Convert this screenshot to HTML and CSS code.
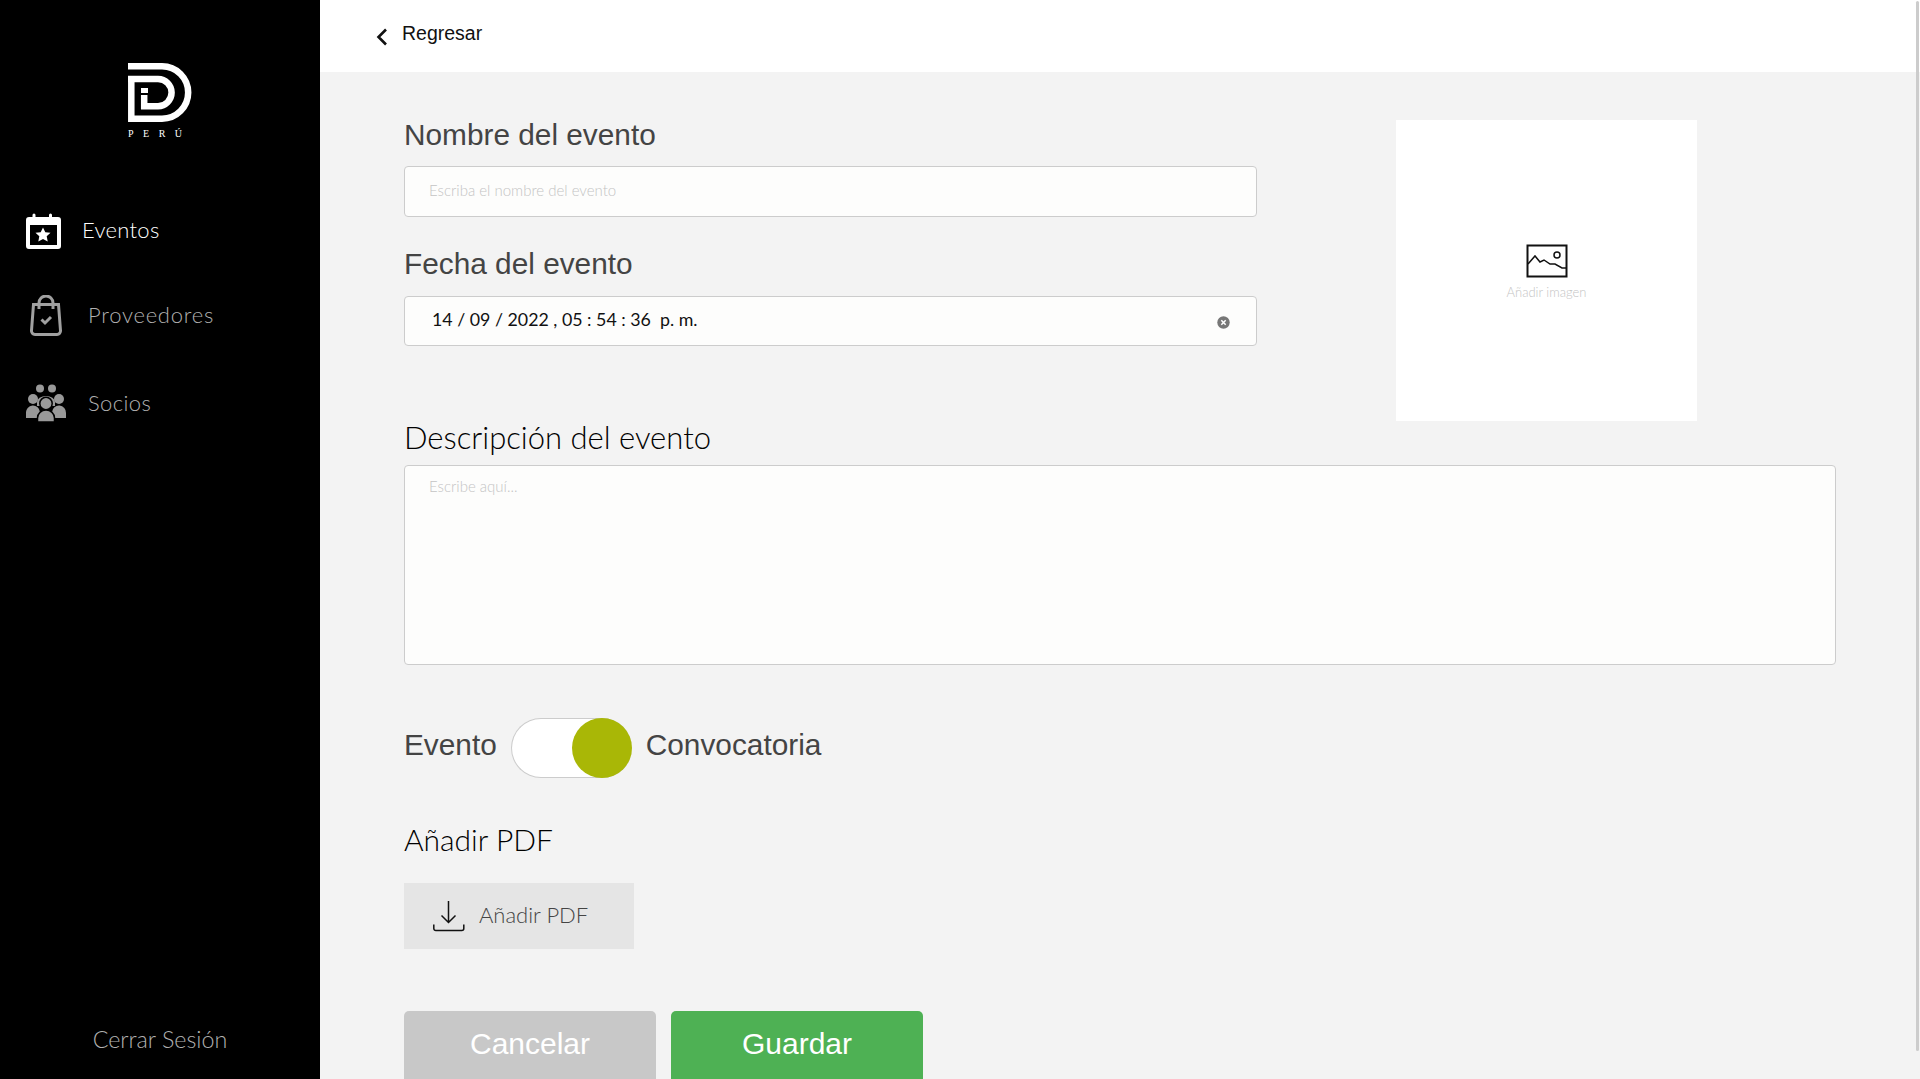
FILE: index.html
```html
<!DOCTYPE html>
<html lang="es">
<head>
    <meta charset="UTF-8" />
    <meta name="viewport" content="width=device-width, initial-scale=1.0" />
    <title>Nuevo evento</title>
    <link rel="stylesheet" href="styles.css">
</head>
<body>
    <div class="app">
        <aside class="sidebar">
            <div class="logo">
                <svg class="logo-mark" width="64" height="60" viewBox="128 63 64 60" fill="none" stroke="#fff" stroke-width="6.5">
                    <path d="M128 66.3 H162 A26.2 26.2 0 0 1 162 118.7 H131.3 V76"/>
                    <path d="M128 79 H158 A13.6 13.6 0 0 1 158 106.2 H144.2 V95"/>
                    <rect x="141" y="88" width="7" height="5" fill="#fff" stroke="none"/>
                </svg>
                <div class="logo-text">PERÚ</div>
            </div>
            <nav class="nav">
                <a class="nav-item active">
                    <svg width="40" height="40" viewBox="26 211 40 40">
                        <path fill="#fff" fill-rule="evenodd" d="M29 217h3.500v-2a1.500 1.500 0 0 1 3 0v2h13.500v-2a1.500 1.500 0 0 1 3 0v2H58a3 3 0 0 1 3 3v26a3 3 0 0 1-3 3H29a3 3 0 0 1-3-3v-26a3 3 0 0 1 3-3zm1 8v20h27v-20z"/>
                        <path fill="#fff" d="M43 227.500l2.300 4.700 5.200.6-3.800 3.500 1 5.200-4.700-2.600-4.700 2.600 1-5.200-3.800-3.500 5.200-.6z"/>
                    </svg>
                    <span>Eventos</span>
                </a>
                <a class="nav-item second">
                    <svg width="40" height="42" viewBox="26 296 40 42" fill="none" stroke="#a0a0a0" stroke-width="3">
                        <path d="M33.500 305.500h25l2 26a3.500 3.500 0 0 1-3.500 4h-22a3.500 3.500 0 0 1-3.500-4z"/>
                        <path d="M39 310v-6a7 7 0 0 1 14 0v6"/>
                        <path d="M41.500 320.500l3.500 3.500 6-6"/>
                    </svg>
                    <span>Proveedores</span>
                </a>
                <a class="nav-item third">
                    <svg width="41" height="40" viewBox="26 385 41 40" fill="#999">
                        <circle cx="40" cy="390.500" r="4"/>
                        <circle cx="52" cy="390.500" r="4"/>
                        <path d="M37 404a9 6 0 0 1 18 0v4h-18z"/>
                        <circle cx="33" cy="401" r="5"/>
                        <circle cx="59" cy="401" r="5"/>
                        <path d="M26 420v-5a7 7 0 0 1 14-1l2 6z"/>
                        <path d="M66 420v-5a7 7 0 0 0-14-1l-2 6z"/>
                        <circle cx="46" cy="405.500" r="6.200" stroke="#000" stroke-width="1.500"/>
                        <path d="M37.500 424v-4a8.500 8 0 0 1 17 0v4z" stroke="#000" stroke-width="1.500"/>
                    </svg>
                    <span>Socios</span>
                </a>
            </nav>
            <a class="logout">Cerrar Sesión</a>
        </aside>

        <div class="content">
            <header class="topbar">
                <svg width="12" height="18" viewBox="0 0 12 18" fill="none" stroke="#111" stroke-width="2.600">
                    <path d="M10 1.500 L2.500 9 L10 16.500"/>
                </svg>
                <span>Regresar</span>
            </header>

            <form class="form">
                <div class="top-row">
                    <div class="top-fields">
                        <label class="label" for="nombre">Nombre del evento</label>
                        <input class="input" id="nombre" type="text" placeholder="Escriba el nombre del evento" />
                        <label class="label date-label" for="fecha">Fecha del evento</label>
                        <div class="date-wrap">
                            <span class="date-value" id="fecha">14 / 09 / 2022 , 05 : 54 : 36 &nbsp;p. m.</span>
                            <svg width="13" height="13" viewBox="0 0 13 13">
                                <circle cx="6.500" cy="6.500" r="6.200" fill="#777"/>
                                <path d="M4.300 4.300l4.400 4.400M8.700 4.300l-4.400 4.400" stroke="#fff" stroke-width="1.500"/>
                            </svg>
                        </div>
                    </div>
                    <div class="image-box">
                        <svg width="42" height="34" viewBox="1526 244 42 34" fill="none" stroke="#111" stroke-width="2">
                            <rect x="1527.500" y="245.500" width="39" height="31"/>
                            <path d="M1528 264l7-8 5 6 4-2 6 4h5l7 4h5" stroke-width="1.500"/>
                            <circle cx="1557" cy="255" r="3" stroke-width="1.500"/>
                        </svg>
                        <span>Añadir imagen</span>
                    </div>
                </div>

                <label class="label geo desc-label" for="descripcion">Descripción del evento</label>
                <textarea class="textarea" id="descripcion" placeholder="Escribe aquí..."></textarea>

                <div class="switch-row">
                    <span>Evento</span>
                    <span class="switch"><span class="knob"></span></span>
                    <span>Convocatoria</span>
                </div>

                <div class="label geo pdf-label">Añadir PDF</div>
                <button class="pdf-btn" type="button">
                    <svg width="32" height="32" viewBox="0 0 32 32" fill="none" stroke="#111" stroke-width="1.500">
                        <path d="M15.500 0v21M8.500 14.500l7 7 7-7"/>
                        <path d="M0.800 23.500v4a2 2 0 0 0 2 2h26a2 2 0 0 0 2-2v-4"/>
                    </svg>
                    <span>Añadir PDF</span>
                </button>

                <div class="actions">
                    <button class="btn btn-cancel" type="button">Cancelar</button>
                    <button class="btn btn-save" type="button">Guardar</button>
                </div>
            </form>
        </div>
        <div class="scroll-thumb"></div>
    </div>
</body>
</html>
```

FILE: styles.css
```css
/* base */
* { box-sizing: border-box; }
html, body { margin: 0; height: 100%; overflow: hidden; }
body { font-family: "Liberation Sans", Arial, sans-serif; color: #444; background: #f3f3f3; }
.app { position: relative; display: flex; height: 100vh; }
.scroll-thumb { position: absolute; top: 1px; right: 1px; width: 3px; height: 1050px; background: #ccc; border-radius: 2px; }

/* sidebar */
.sidebar { width: 320px; flex: none; background: #000; display: flex; flex-direction: column; font-family: Lato, sans-serif; font-weight: 300; }
.logo { padding: 63px 0 0 128px; height: 211px; }
.logo-mark { display: block; }
.logo-text { margin-top: 5px; font: 10px/12px "Liberation Serif", serif; letter-spacing: 9.500px; color: #fff; }
.nav { display: flex; flex-direction: column; }
.nav-item { display: flex; align-items: center; gap: 16px; height: 40px; padding-left: 26px; font-size: 22px; color: #b0b0b0; letter-spacing: 0.300px; }
.nav-item span { margin-top: -3px; }
.nav-item.active { color: #fff; }
.nav-item.second { margin-top: 45px; gap: 22px; letter-spacing: 0.750px; }
.nav-item.third { margin-top: 47px; gap: 21px; letter-spacing: 0.400px; }
.nav-item.third span { margin-top: -2px; }
.logout { margin-top: auto; padding-bottom: 26px; text-align: center; font-size: 23.300px; line-height: 28px; color: #b0b0b0; }

/* content */
.content { flex: 1; height: 100vh; overflow-y: auto; }

.topbar { display: flex; align-items: center; height: 72px; padding: 0 0 0 56px; gap: 14px; background: #fff; font-size: 19.500px; color: #111; }
.topbar svg { margin-top: 1px; }
.topbar span { margin-top: -6px; }

.form { padding: 47px 80px 17px 84px; }
.top-row { display: flex; height: 303px; }
.top-fields { width: 853px; flex: none; }
.label { display: block; font-size: 29.800px; line-height: 32px; color: #444; }
.label.geo { font-family: Lato, sans-serif; font-weight: 300; color: #000; font-size: 30px; }
.desc-label.label.geo { font-size: 31px; margin-top: -1px; }
.input { display: block; width: 100%; height: 51px; margin-top: 15px; padding: 0 24px 4px; background: #fdfdfc; border: 1px solid #ccc; border-radius: 4px; font: 300 15px Lato, sans-serif; outline: none; }
.input::placeholder, .textarea::placeholder { color: #c4c4c4; opacity: 1; }
.date-label { margin-top: 31px; }
.date-wrap { display: flex; align-items: center; justify-content: space-between; height: 50px; margin-top: 16px; padding: 0 26px 0 27px; background: #fdfdfc; border: 1px solid #ccc; border-radius: 4px; }
.date-value { font: 400 17.800px Lato, sans-serif; color: #111; margin-top: -4px; }
.date-wrap svg { margin-top: 2px; }
.image-box { width: 301px; height: 301px; margin: 1px 0 0 139px; background: #fff; display: flex; flex-direction: column; align-items: center; padding-top: 124px; font: 300 13px/16px Lato, sans-serif; color: #c4c4c4; }
.image-box svg { display: block; margin-bottom: 6px; }

.textarea { display: block; width: 1432px; height: 200px; margin-top: 12px; padding: 11px 24px; resize: none; background: #fdfdfc; border: 1px solid #ccc; border-radius: 4px; font: 300 15px Lato, sans-serif; outline: none; }

.switch-row { display: flex; align-items: center; height: 60px; margin-top: 53px; font-size: 29.800px; line-height: 34px; color: #444; }
.switch-row > span:first-child, .switch-row > span:last-child { margin-top: -6px; }
.switch { width: 121px; height: 60px; margin: 0 14px 0 14px; display: flex; justify-content: flex-end; background: #fff; border: 1px solid #ccc; border-right: 0; border-radius: 30px; }
.knob { width: 60px; height: 60px; margin-top: -1px; border-radius: 50%; background: #a9b706; }

.pdf-label { margin-top: 45px; }
.pdf-btn { display: flex; align-items: center; gap: 13px; width: 230px; height: 66px; margin-top: 28px; padding: 2px 0 0 29px; border: 0; background: #e5e5e5; font: 300 22px Lato, sans-serif; color: #444; }
.pdf-btn span { margin-top: -6px; margin-left: 1px; }

.actions { display: flex; gap: 15px; margin-top: 62px; }
.btn { width: 252px; height: 80px; padding: 0 0 14px; border: 0; border-radius: 5px; color: #fff; font: 30px "Liberation Sans", Arial, sans-serif; }
.btn-cancel { background: #c8c8c8; }
.btn-save { background: #4eb154; }
```
